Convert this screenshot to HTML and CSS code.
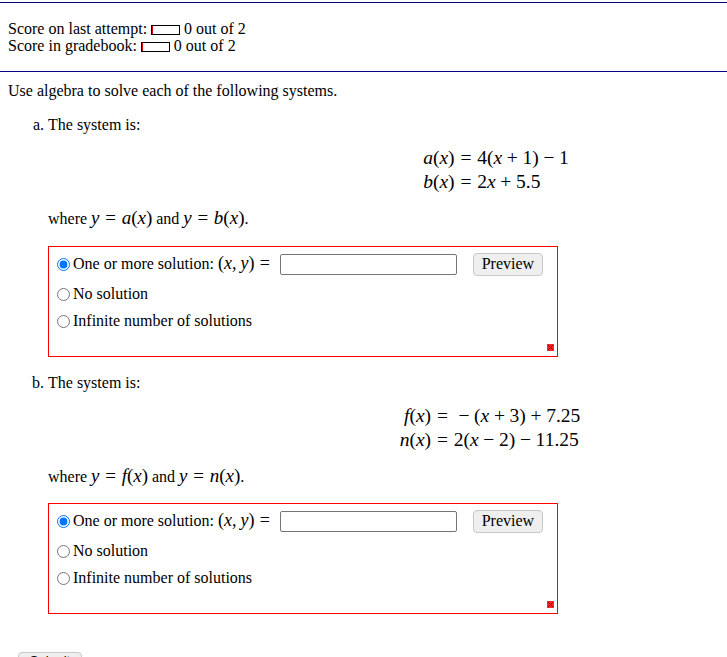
FILE: index.html
```html
<!DOCTYPE html>
<html>
<head>
<meta charset="utf-8">
<link rel="stylesheet" href="styles.css">
</head>
<body>
<div class="rule top"></div>
<div class="scores">
  <div class="score-line">Score on last attempt: <span class="meter"><span class="meter-fill"></span></span> 0 out of 2</div>
  <div class="score-line">Score in gradebook: <span class="meter"><span class="meter-fill"></span></span> 0 out of 2</div>
</div>
<div class="rule"></div>
<div class="question">
  <p class="intro">Use algebra to solve each of the following systems.</p>
  <ol class="parts">
    <li class="part part-a">
      <div class="part-title">The system is:</div>
      <div class="eq-wrap">
        <div class="eqs">
          <div class="lhs"><i>a</i>(<i>x</i>)</div>
          <div class="rhs"><span class="rel">=</span>4(<i>x</i><span class="bin">+</span>1)<span class="bin">−</span>1</div>
          <div class="lhs"><i>b</i>(<i>x</i>)</div>
          <div class="rhs"><span class="rel">=</span>2<i>x</i><span class="bin">+</span>5.5</div>
        </div>
      </div>
      <div class="where">where <span class="m"><i>y</i><span class="rel">=</span><i>a</i>(<i>x</i>)</span> and <span class="m"><i>y</i><span class="rel">=</span><i>b</i>(<i>x</i>)</span>.</div>
      <div class="answer-box">
        <div class="opt opt-first">
          <input type="radio" name="qa" checked>
          <span>One or more solution: <span class="m m-opt">(<i>x</i>,<span class="comma"></span><i>y</i>)<span class="rel">=</span></span></span>
          <input type="text" class="ans">
          <button class="preview">Preview</button>
        </div>
        <div class="opt"><input type="radio" name="qa"><span>No solution</span></div>
        <div class="opt"><input type="radio" name="qa"><span>Infinite number of solutions</span></div>
        <div class="mark-row">
          <svg class="wrong" width="7" height="7" viewBox="0 0 7 7"><rect width="7" height="7" fill="#f02828"/><path d="M1 1L6 6M6 1L1 6" stroke="#b00000" stroke-width="1"/></svg>
        </div>
      </div>
    </li>
    <li class="part part-b">
      <div class="part-title">The system is:</div>
      <div class="eq-wrap eq-wrap-b">
        <div class="eqs">
          <div class="lhs"><i>f</i>(<i>x</i>)</div>
          <div class="rhs"><span class="rel">=</span><span class="bin">−</span>(<i>x</i><span class="bin">+</span>3)<span class="bin">+</span>7.25</div>
          <div class="lhs"><i>n</i>(<i>x</i>)</div>
          <div class="rhs"><span class="rel">=</span>2(<i>x</i><span class="bin">−</span>2)<span class="bin">−</span>11.25</div>
        </div>
      </div>
      <div class="where">where <span class="m"><i>y</i><span class="rel">=</span><i>f</i>(<i>x</i>)</span> and <span class="m"><i>y</i><span class="rel">=</span><i>n</i>(<i>x</i>)</span>.</div>
      <div class="answer-box answer-box-b">
        <div class="opt opt-first">
          <input type="radio" name="qb" checked>
          <span>One or more solution: <span class="m m-opt">(<i>x</i>,<span class="comma"></span><i>y</i>)<span class="rel">=</span></span></span>
          <input type="text" class="ans">
          <button class="preview">Preview</button>
        </div>
        <div class="opt"><input type="radio" name="qb"><span>No solution</span></div>
        <div class="opt"><input type="radio" name="qb"><span>Infinite number of solutions</span></div>
        <div class="mark-row">
          <svg class="wrong" width="7" height="7" viewBox="0 0 7 7"><rect width="7" height="7" fill="#f02828"/><path d="M1 1L6 6M6 1L1 6" stroke="#b00000" stroke-width="1"/></svg>
        </div>
      </div>
    </li>
  </ol>
  <div class="submit-row"><button class="submit">Submit</button></div>
</div>
</body>
</html>
```
FILE: styles.css
```css
html, body {
  margin: 0;
  padding: 0;
  background: #fff;
}
body {
  font-family: "Liberation Serif", "Times New Roman", serif;
  font-size: 16px;
  color: #000;
  overflow: hidden;
}
.rule {
  height: 1px;
  background: #000080;
}
.rule.top {
  margin-top: 2px;
}
.scores {
  padding: 17px 8px 17px 8px;
}
.score-line {
  line-height: 17px;
  height: 17px;
}
.meter {
  display: inline-block;
  width: 27px;
  height: 8px;
  border: 1px solid #000;
  vertical-align: -1px;
  position: relative;
}
.meter-fill {
  position: absolute;
  left: 0;
  top: 0;
  width: 1px;
  height: 8px;
  background: #e00000;
}
.question {
  padding: 0 8px;
}
.intro {
  margin: 10px 0 0 0;
  line-height: 18px;
}
.parts {
  list-style: lower-alpha;
  margin: 0;
  padding-left: 40px;
}
.part-title {
  line-height: 18px;
  height: 18px;
}
.part-a {
  margin-top: 16px;
}
.part-b {
  margin-top: 17px;
}
.eq-wrap {
  width: 400px;
  margin-left: 248px;
  display: flex;
  justify-content: center;
  margin-top: 14px;
}
.eq-wrap-b {
  margin-left: 242px;
}
.eqs {
  display: grid;
  grid-template-columns: auto auto;
  row-gap: 4px;
  font-size: 19.5px;
  line-height: 20px;
}
.eqs > div {
  height: 20px;
}
.lhs {
  text-align: right;
}
.rhs {
  text-align: left;
}
i {
  font-style: italic;
}
.rel {
  margin: 0 0.3em;
}
.bin {
  margin: 0 0.24em;
}
.m {
  font-size: 19px;
  line-height: 10px;
}
.m-opt {
  font-size: 18px;
}
.m-opt .rel {
  margin-right: 0;
}
.comma {
  display: inline-block;
  width: 4px;
}
.where {
  margin-top: 18px;
  line-height: 18px;
  height: 18px;
}
.answer-box {
  margin-top: 18px;
  width: 502px;
  border: 1px solid #ff0000;
  padding: 5px 3px 5px 3px;
}
.answer-box-b {
  margin-top: 17px;
}
.opt {
  display: flex;
  align-items: center;
  height: 18px;
  line-height: 18px;
  margin-top: 9px;
}
.opt-first {
  height: 24px;
  margin-top: 0;
}
.opt input[type="radio"] {
  margin: 0 3px 0 5px;
  width: 13px;
  height: 13px;
}
.ans {
  margin: 0 0 0 10px;
  width: 177px;
  height: 21px;
  box-sizing: border-box;
  border: 1px solid #767676;
  border-radius: 2px;
  padding: 0 2px;
  font-family: inherit;
}
.preview {
  margin-left: 16px;
  height: 23px;
  width: 70px;
  box-sizing: border-box;
  border: 1px solid #c8c8c8;
  border-radius: 4px;
  background: #efefef;
  font-family: "Liberation Serif", "Times New Roman", serif;
  font-size: 16px;
  color: #000;
  padding: 0;
}
.mark-row {
  display: flex;
  justify-content: flex-end;
  margin-top: 14px;
  height: 7px;
}
.wrong {
  display: block;
}
.submit-row {
  margin-top: 38px;
  padding-left: 10px;
}
.submit {
  width: 64px;
  height: 26px;
  border: 1px solid #c8c8c8;
  border-radius: 4px;
  background: #efefef;
  font-family: "Liberation Sans", Arial, sans-serif;
  font-size: 13px;
  line-height: 15px;
  padding: 0;
  display: flex;
  align-items: flex-start;
  justify-content: center;
  box-sizing: border-box;
}
```
